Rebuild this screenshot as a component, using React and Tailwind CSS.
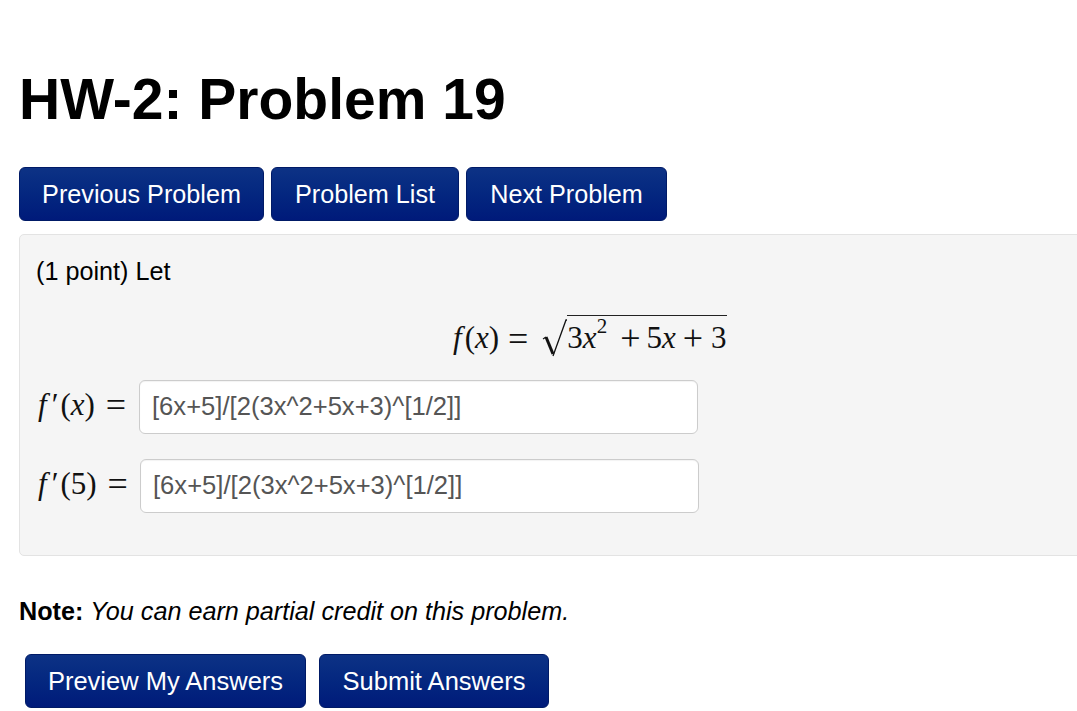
import React from "react"

const styles = {
  btn: `h-[54px] rounded-[6px] border border-[#001a66] bg-gradient-to-b from-[#0d3285] to-[#001a7a] pt-[2px] text-[25.2px] leading-none text-white`,
  input: `h-[54px] w-[559px] rounded-[6px] border border-[#cccccc] bg-white pl-[12px] text-[25.6px] leading-none text-[#555555] shadow-[inset_0_1px_1px_rgba(0,0,0,0.05)] flex items-center`,
  math: `font-['Liberation_Serif',serif] text-[#111111]`,
  op: `inline-block translate-y-[2px] text-[36px] leading-[31px]`,
}

const Prime = ({ arg, className }) => (
  <span className={`${styles.math} ${className} flex items-baseline pb-[6px] text-[31px] leading-none whitespace-nowrap`}>
    <i className="ml-[2px]">f</i>
    <span className="ml-[5px]">′</span>
    <span className="ml-[2px]">(</span>
    <span>{arg}</span>)
    <span className={`${styles.op} ml-[11px]`}>=</span>
  </span>
)

const App = () => {
  return (
    <div className="h-[711px] w-[1077px] overflow-hidden bg-white font-['Liberation_Sans',Arial,sans-serif] text-black">
      <div className="pl-[19px]">
        <h1 className="pt-[64px] text-[57px] font-bold leading-[70px]">HW-2: Problem 19</h1>

        <div className="mt-[33px] flex gap-[7px]">
          <button className={`${styles.btn} w-[245px]`}>Previous Problem</button>
          <button className={`${styles.btn} w-[188px]`}>Problem List</button>
          <button className={`${styles.btn} w-[201px]`}>Next Problem</button>
        </div>

        <div className="mt-[13px] h-[322px] w-[1100px] rounded-[5px] border border-[#e3e3e3] bg-[#f5f5f5] pl-[16px] pt-[21px]">
          <p className="text-[25.2px] leading-[30px]">(1 point) Let</p>

          <div className={`${styles.math} mt-[21px] flex h-[54px] items-center pl-[415px] text-[31px] leading-none`}>
            <span className="flex items-end whitespace-nowrap">
              <i className="ml-[2px] mr-[3px]">f</i>(<i>x</i>)
              <span className={`${styles.op} ml-[9px]`}>=</span>
              <svg className="ml-[11px] mb-[-4px] h-[38px] w-[28px] shrink-0" viewBox="0 0 28 38" fill="none" stroke="#111111">
                <path d="M4 20 L7 18" strokeWidth="1.2" />
                <path d="M7 18 L14 35" strokeWidth="3" />
                <path d="M14 37 L27 1 L28 1" strokeWidth="1.3" />
              </svg>
              <span className="border-t-[1.5px] border-[#222222] pt-[5px]">
                3<i>x</i>
                <sup className="-top-[15px] text-[21px] leading-none">2</sup>
                <span className={`${styles.op} ml-[13px]`}>+</span>
                <span className="ml-[6px]">5</span>
                <i>x</i>
                <span className={`${styles.op} ml-[7px]`}>+</span>
                <span className="ml-[8px]">3</span>
              </span>
            </span>
          </div>

          <div className="mt-[19px] flex items-center">
            <Prime arg={<i>x</i>} className="w-[103px]" />
            <div className={styles.input}>[6x+5]/[2(3x^2+5x+3)^[1/2]]</div>
          </div>

          <div className="mt-[25px] flex items-center">
            <Prime arg="5" className="w-[104px]" />
            <div className={styles.input}>[6x+5]/[2(3x^2+5x+3)^[1/2]]</div>
          </div>
        </div>

        <p className="mt-[40px] text-[25.2px] leading-[30px]">
          <b>Note:</b> <i>You can earn partial credit on this problem.</i>
        </p>

        <div className="mt-[28px] flex gap-[13px] pl-[6px]">
          <button className={`${styles.btn} w-[281px] text-[25.5px]`}>Preview My Answers</button>
          <button className={`${styles.btn} w-[230px] text-[25.5px]`}>Submit Answers</button>
        </div>
      </div>
    </div>
  )
}

export default App
